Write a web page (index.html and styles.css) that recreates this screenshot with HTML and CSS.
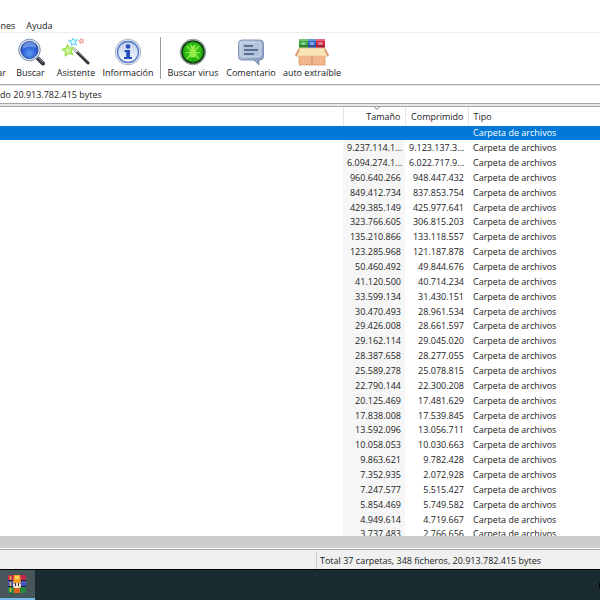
FILE: index.html
```
<!DOCTYPE html>
<html lang="es">
<head>
    <meta charset="UTF-8">
    <meta name="viewport" content="width=device-width, initial-scale=1.0">
    <title>WinRAR</title>
    <link rel="stylesheet" href="styles.css">
</head>
<body>
    <nav class="menu">
        <button class="cut">ones</button>
        <button>Ayuda</button>
    </nav>

    <div class="toolbar">
        <button class="tool cut">ar</button>
        <button class="tool">
            <svg viewBox="0 0 28 28">
                <defs>
                    <radialGradient id="lens" cx=".5" cy=".7" r=".7">
                        <stop offset="0" stop-color="#5c9cf5"/><stop offset=".6" stop-color="#2d5fd2"/><stop offset="1" stop-color="#1b40a8"/>
                    </radialGradient>
                </defs>
                <path d="M19 19l2 2" stroke="#aab4c0" stroke-width="3"/>
                <path d="M21 20.500l5 5" stroke="#35383f" stroke-width="4" stroke-linecap="round"/>
                <path d="M21 19.500l5.500 5" stroke="#a3a8b0" stroke-width="1"/>
                <circle cx="12.500" cy="12" r="10.800" fill="#d9e1ec" stroke="#7e92b4" stroke-width="1"/>
                <circle cx="12.500" cy="12" r="8.600" fill="url(#lens)" stroke="#193b92" stroke-width=".8"/>
                <path d="M5.500 11a7 7 0 0 1 14-1q-7-3-14 1z" fill="#8db3f2" opacity=".65"/>
            </svg>
            Buscar
        </button>
        <button class="tool">
            <svg viewBox="0 0 28 28">
                <path d="M13 12l13 13" stroke="#34373a" stroke-width="3" stroke-linecap="round"/>
                <path d="M13 11l13 12" stroke="#9b9b9b" stroke-width="1"/>
                <path d="M12 11l3 3" stroke="#d5d5d5" stroke-width="3"/>
                <path d="M5.500 7l1.800 3.200 4-.5-2.500 3.100 1.800 3.700-4-1.500-3.300 2.600.2-4.300-3.500-2 4.200-.9z" fill="#d4f7a6" stroke="#8fe03c" stroke-width="1.200"/>
                <path d="M11 0l1.200 2.200 3-.4-1.800 2.300 1 2.700-2.700-.9-2.300 1.700.1-2.900L7 3l2.800-.7z" fill="#d9f7ff" stroke="#6fd6ee" stroke-width="1.100"/>
                <path d="M19 .5l.9 1.400 1.900-.2-1.100 1.500.7 1.800-1.800-.6-1.500 1.200V3.700l-1.600-1 1.900-.5z" fill="#fcd2d2" stroke="#f29292" stroke-width=".9"/>
            </svg>
            Asistente
        </button>
        <button class="tool">
            <svg viewBox="0 0 28 28">
                <defs>
                    <linearGradient id="info" x2="0" y2="1">
                        <stop offset="0" stop-color="#bfcde4"/><stop offset="1" stop-color="#f4f9ff"/>
                    </linearGradient>
                </defs>
                <circle cx="14" cy="14" r="12.800" fill="#e6ecf5" stroke="#a8b7ce"/>
                <circle cx="14" cy="14" r="10.500" fill="url(#info)" stroke="#5077c2" stroke-width="1.300"/>
                <circle cx="14" cy="8.500" r="2.300" fill="#2350bd"/>
                <path d="M10.500 12h5.500v7h2v2h-8v-2h2.200v-5h-1.700z" fill="#2350bd"/>
            </svg>
            Información
        </button>
        <div class="divider"></div>
        <button class="tool">
            <svg viewBox="0 0 28 28">
                <defs>
                    <radialGradient id="virus">
                        <stop offset="0" stop-color="#4fdc20"/><stop offset="1" stop-color="#20ab12"/>
                    </radialGradient>
                </defs>
                <circle cx="14" cy="14" r="12.800" fill="#e4e8e4" stroke="#929a94"/>
                <circle cx="14" cy="14" r="11" fill="url(#virus)" stroke="#123b15" stroke-width="1.700"/>
                <path d="M14 3v22M3 14h22" stroke="#128a0b" stroke-width=".8"/>
                <path d="M8 8l3 3.500M20 8l-3 3.500M6.500 14.500h15M8 20.500l3.500-3.500M20 20.500l-3.500-3.500M11.500 6.500l1.500 3M16.500 6.500l-1.500 3" stroke="#8fee4a" stroke-width="1.200" fill="none"/>
                <ellipse cx="14" cy="15" rx="3.500" ry="4.500" fill="#96ee4c"/>
                <circle cx="14" cy="9.500" r="2" fill="#96ee4c"/>
            </svg>
            Buscar virus
        </button>
        <button class="tool">
            <svg viewBox="0 0 28 28">
                <defs>
                    <linearGradient id="note" x2="1" y2="1">
                        <stop offset="0" stop-color="#c6d3e6"/><stop offset=".5" stop-color="#9fb3d0"/><stop offset="1" stop-color="#7890b8"/>
                    </linearGradient>
                </defs>
                <path d="M5 2h18q3.500 0 3.500 3.500v13q0 3.500-3.500 3.500h-1v5l-5-5H5q-3.500 0-3.500-3.500v-13Q1.500 2 5 2z" fill="url(#note)" stroke="#8094b5"/>
                <rect x="4" y="4.500" width="20" height="14.500" rx="2" fill="#b3c4dc" stroke="#d6e1ef" stroke-width=".8"/>
                <path d="M7 8h9M7 12h14M7 16h10" stroke="#3e5478" stroke-width="1.400"/>
            </svg>
            Comentario
        </button>
        <button class="tool">
            <svg class="wide" viewBox="0 0 34 28">
                <rect x="4" y="1" width="9" height="11" fill="#38ad3c"/>
                <rect x="13" y="1" width="8" height="11" fill="#2f67ce"/>
                <rect x="21" y="1" width="9" height="11" fill="#d92942"/>
                <path d="M4 2h26" stroke="#fff" stroke-opacity=".3" stroke-width="2"/>
                <path d="M4 8h26" stroke="#262b42" stroke-opacity=".5" stroke-width="1.500"/>
                <path d="M6.500 4h4v3h-4zM15 4h4v3h-4zM23.500 4h4v3h-4z" fill="#d9e5ee" opacity=".5"/>
                <path d="M4 11h26v16H4z" fill="#f3b68c" stroke="#d8976d" stroke-width=".8"/>
                <path d="M17 18v9" stroke="#cb8a62"/>
                <path d="M4 10h26l3 8H1z" fill="#fae5b8" stroke="#e2bb88" stroke-width=".8"/>
                <path d="M4 10l-4 7 1 2 3.500-6zM30 10l4 7-1 2-3.500-6z" fill="#dd9a6e"/>
            </svg>
            auto extraíble
        </button>
    </div>

    <div class="address">do 20.913.782.415 bytes</div>

    <main class="list">
        <table>
            <colgroup><col><col class="size"><col class="packed"><col class="type"></colgroup>
            <thead>
                <tr>
                    <th></th>
                    <th class="sorted">
                        <svg class="arrow" viewBox="0 0 6 3"><path d="M.5 0L3 2.500 5.500 0" fill="none" stroke="#777"/></svg>
                        Tamaño
                    </th>
                    <th>Comprimido</th>
                    <th>Tipo</th>
                </tr>
            </thead>
            <tbody>
                <tr class="selected"><td></td><td></td><td></td><td>Carpeta de archivos</td></tr>
                <tr><td></td><td>9.237.114.1...</td><td>9.123.137.3...</td><td>Carpeta de archivos</td></tr>
                <tr><td></td><td>6.094.274.1...</td><td>6.022.717.9...</td><td>Carpeta de archivos</td></tr>
                <tr><td></td><td>960.640.266</td><td>948.447.432</td><td>Carpeta de archivos</td></tr>
                <tr><td></td><td>849.412.734</td><td>837.853.754</td><td>Carpeta de archivos</td></tr>
                <tr><td></td><td>429.385.149</td><td>425.977.641</td><td>Carpeta de archivos</td></tr>
                <tr><td></td><td>323.766.605</td><td>306.815.203</td><td>Carpeta de archivos</td></tr>
                <tr><td></td><td>135.210.866</td><td>133.118.557</td><td>Carpeta de archivos</td></tr>
                <tr><td></td><td>123.285.968</td><td>121.187.878</td><td>Carpeta de archivos</td></tr>
                <tr><td></td><td>50.460.492</td><td>49.844.676</td><td>Carpeta de archivos</td></tr>
                <tr><td></td><td>41.120.500</td><td>40.714.234</td><td>Carpeta de archivos</td></tr>
                <tr><td></td><td>33.599.134</td><td>31.430.151</td><td>Carpeta de archivos</td></tr>
                <tr><td></td><td>30.470.493</td><td>28.961.534</td><td>Carpeta de archivos</td></tr>
                <tr><td></td><td>29.426.008</td><td>28.661.597</td><td>Carpeta de archivos</td></tr>
                <tr><td></td><td>29.162.114</td><td>29.045.020</td><td>Carpeta de archivos</td></tr>
                <tr><td></td><td>28.387.658</td><td>28.277.055</td><td>Carpeta de archivos</td></tr>
                <tr><td></td><td>25.589.278</td><td>25.078.815</td><td>Carpeta de archivos</td></tr>
                <tr><td></td><td>22.790.144</td><td>22.300.208</td><td>Carpeta de archivos</td></tr>
                <tr><td></td><td>20.125.469</td><td>17.481.629</td><td>Carpeta de archivos</td></tr>
                <tr><td></td><td>17.838.008</td><td>17.539.845</td><td>Carpeta de archivos</td></tr>
                <tr><td></td><td>13.592.096</td><td>13.056.711</td><td>Carpeta de archivos</td></tr>
                <tr><td></td><td>10.058.053</td><td>10.030.663</td><td>Carpeta de archivos</td></tr>
                <tr><td></td><td>9.863.621</td><td>9.782.428</td><td>Carpeta de archivos</td></tr>
                <tr><td></td><td>7.352.935</td><td>2.072.928</td><td>Carpeta de archivos</td></tr>
                <tr><td></td><td>7.247.577</td><td>5.515.427</td><td>Carpeta de archivos</td></tr>
                <tr><td></td><td>5.854.469</td><td>5.749.582</td><td>Carpeta de archivos</td></tr>
                <tr><td></td><td>4.949.614</td><td>4.719.667</td><td>Carpeta de archivos</td></tr>
                <tr><td></td><td>3.737.483</td><td>2.766.656</td><td>Carpeta de archivos</td></tr>
            </tbody>
        </table>
    </main>
    <div class="scrollbar"></div>

    <footer class="status">
        <div></div>
        <div class="total">Total 37 carpetas, 348 ficheros, 20.913.782.415 bytes</div>
    </footer>

    <div class="taskbar">
        <button class="task" aria-label="WinRAR">
            <svg viewBox="0 0 20 18">
                <rect x="1" y="0" width="18" height="6" rx="1" fill="#c22a4b"/>
                <rect x="1" y="6" width="18" height="6" rx="1" fill="#4556c0"/>
                <rect x="1" y="12" width="18" height="6" rx="1" fill="#258a3b"/>
                <path d="M1 5.500h18M1 11.500h18" stroke="#2a1c38"/>
                <path d="M3.500 1v4M3.500 7v4M3.500 13v4" stroke="#e4b24a" stroke-width="1.500"/>
                <path d="M7 0h6l1 8H6z" fill="#f3a02b"/>
                <path d="M8 1h4v3H8z" fill="#ffd052"/>
                <rect x="6" y="8" width="8" height="5" rx="2" fill="#f5e4d6"/>
                <path d="M8.500 8v3M11.500 8v3" stroke="#3a2430" stroke-width="1"/>
                <path d="M7 13h6v5H7z" fill="#e0641f"/>
            </svg>
        </button>
        <div class="tray"></div>
    </div>
</body>
</html>
```

FILE: styles.css
```
* { box-sizing: border-box; }
body {
    display: flex;
    flex-direction: column;
    height: 100vh;
    margin: 0;
    overflow: hidden;
    background: #fff;
    color: #222;
    font-family: "Open Sans", sans-serif;
    font-size: 9px;
    line-height: 12px;
}
button {
    padding: 0;
    border: none;
    background: none;
    color: inherit;
    font: inherit;
    white-space: nowrap;
}
svg { display: block; }

.menu {
    display: flex;
    gap: 11px;
    padding: 20px 0 0;
    border-bottom: 1px solid #eee;
}
.cut { margin-left: -5px; }

.toolbar {
    display: grid;
    grid-template-columns: 8px 45px 46px 58px 7px 58px 58px 64px;
    padding: 4px 0 5px;
    border-bottom: 1px solid #a5a5a5;
}
.tool {
    display: flex;
    flex-direction: column;
    align-items: center;
    justify-content: flex-end;
    gap: 1px;
}
.tool svg { width: 28px; height: 28px; }
.tool .wide { width: 34px; }
.divider {
    width: 1px;
    height: 42px;
    margin: 0 auto;
    background: #999;
}

.address {
    padding: 3px 0 2px;
    border-top: 1px solid #eee;
    border-bottom: 1px solid #a5a5a5;
}

.list {
    flex: 1;
    min-height: 0;
    overflow: hidden;
    margin-top: 2px;
    border-top: 1px solid #a5a5a5;
    box-shadow: 0 -2px #e8e8ec;
}
table {
    width: 100%;
    table-layout: fixed;
    border-collapse: collapse;
}
.size { width: 62px; }
.packed { width: 63px; }
.type { width: 132px; }
th, td {
    padding: 0 4px;
    text-align: right;
    font-weight: normal;
    white-space: nowrap;
}
th {
    height: 19px;
    border-right: 1px solid #e5e5e5;
}
th:last-child, td:last-child {
    border-right: none;
    padding-left: 5px;
    text-align: left;
}
.sorted { position: relative; }
.arrow {
    position: absolute;
    top: 0;
    left: 50%;
    width: 6px;
    height: 3px;
}
td { height: 15px; }
tr:nth-child(7n) td { height: 14px; }
td:nth-child(2) { background: #f6f6f6; }
.selected td, .selected td:nth-child(2) {
    height: 14px;
    background: #0078d7;
    color: #fff;
}

.scrollbar {
    height: 12px;
    background: #cdcdcd;
}

.status {
    display: grid;
    grid-template-columns: 316px 1fr;
    margin-top: 1px;
    border-top: 1px solid #a5a5a5;
    background: #f0f0f0;
}
.total {
    margin-top: 2px;
    padding: 3px 3px 2px;
    border-left: 1px solid #ccc;
}

.taskbar {
    display: flex;
    align-items: center;
    justify-content: space-between;
    height: 31px;
    border-top: 1px solid #000;
    background: #1b2c31;
}
.task {
    display: flex;
    align-items: center;
    justify-content: center;
    width: 35px;
    height: 100%;
    padding-right: 2px;
    border-bottom: 2px solid #76b9ed;
    background: #46565b;
}
.task svg { width: 20px; height: 18px; }
.tray {
    width: 1px;
    height: 5px;
    background: #000;
}
```
